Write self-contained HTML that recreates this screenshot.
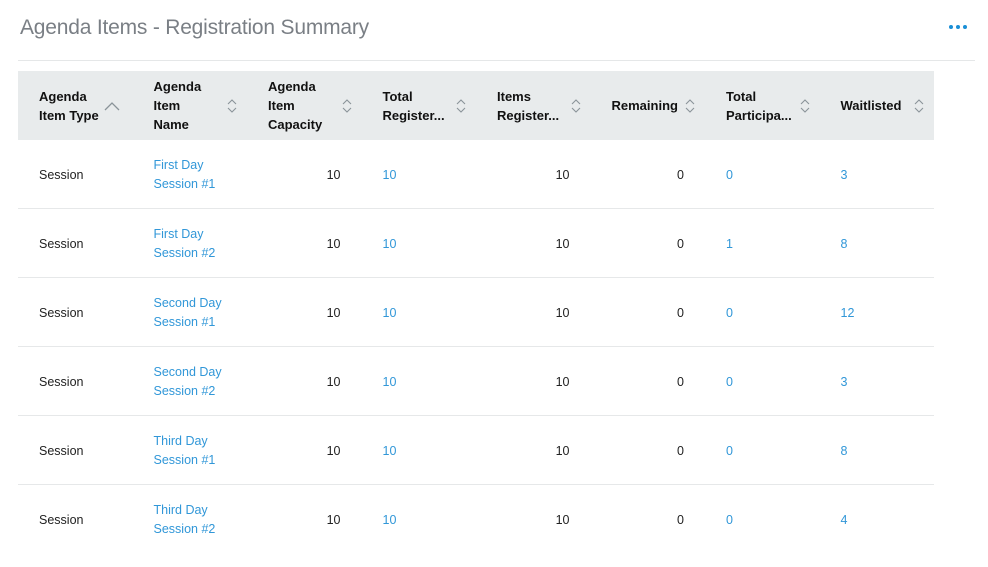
<!DOCTYPE html>
<html><head><style>
body{margin:0;background:#fff;font-family:"Liberation Sans",sans-serif;width:988px;height:567px;overflow:hidden;position:relative}
.t{position:absolute;left:20px;top:16px;font-size:21px;color:#7a7f85;font-weight:300;letter-spacing:-0.2px}
.dots{position:absolute;left:949px;top:25px;display:flex;height:4px}
.dots i{display:block;width:4px;height:4px;border-radius:50%;background:#1a8fd6;margin-right:3px}
.hr{position:absolute;left:18px;top:60px;width:957px;height:1px;background:#e5e7e8}
table{position:absolute;left:18px;top:71px;width:916px;border-collapse:collapse;table-layout:fixed}
th{background:#e8ebec;height:69px;text-align:left;font-size:13px;color:#111;font-weight:bold;padding:0 0 0 21px;line-height:19px;position:relative;vertical-align:middle}
th span{display:block;width:60px}
th svg{position:absolute;right:9px;top:27px}
td{height:66px;border-bottom:1px solid #e6e8e9;font-size:12.5px;color:#222;padding:2px 20px 0 21px;line-height:19px}
td.n{text-align:right;padding-right:21px}
td.l{color:#3197d8}
tr:last-child td{border-bottom:none}
</style></head><body>
<div class="t">Agenda Items - Registration Summary</div>
<div class="dots"><i></i><i></i><i></i></div>
<div class="hr"></div>
<table>
<tr>
<th><span style="width:70px">Agenda Item Type</span><svg width="18" height="14" style="right:12px;top:29px"><path d="M2 10 L9 3 L16 10" fill="none" stroke="#8a9399" stroke-width="1.3"/></svg></th>
<th><span>Agenda Item Name</span><svg width="12" height="16"><path d="M2 6 L6 2 L10 6 M2 10 L6 14 L10 10" fill="none" stroke="#8a9399" stroke-width="1.1"/></svg></th>
<th><span>Agenda Item Capacity</span><svg width="12" height="16"><path d="M2 6 L6 2 L10 6 M2 10 L6 14 L10 10" fill="none" stroke="#8a9399" stroke-width="1.1"/></svg></th>
<th><span>Total Register...</span><svg width="12" height="16"><path d="M2 6 L6 2 L10 6 M2 10 L6 14 L10 10" fill="none" stroke="#8a9399" stroke-width="1.1"/></svg></th>
<th><span>Items Register...</span><svg width="12" height="16"><path d="M2 6 L6 2 L10 6 M2 10 L6 14 L10 10" fill="none" stroke="#8a9399" stroke-width="1.1"/></svg></th>
<th><span style="width:80px">Remaining</span><svg width="12" height="16"><path d="M2 6 L6 2 L10 6 M2 10 L6 14 L10 10" fill="none" stroke="#8a9399" stroke-width="1.1"/></svg></th>
<th><span>Total Participa...</span><svg width="12" height="16"><path d="M2 6 L6 2 L10 6 M2 10 L6 14 L10 10" fill="none" stroke="#8a9399" stroke-width="1.1"/></svg></th>
<th><span style="width:80px">Waitlisted</span><svg width="12" height="16"><path d="M2 6 L6 2 L10 6 M2 10 L6 14 L10 10" fill="none" stroke="#8a9399" stroke-width="1.1"/></svg></th>
</tr>
<tr><td>Session</td><td class="l">First Day<br>Session #1</td><td class="n">10</td><td class="l">10</td><td class="n">10</td><td class="n">0</td><td class="l">0</td><td class="l">3</td></tr>
<tr><td>Session</td><td class="l">First Day<br>Session #2</td><td class="n">10</td><td class="l">10</td><td class="n">10</td><td class="n">0</td><td class="l">1</td><td class="l">8</td></tr>
<tr><td>Session</td><td class="l">Second Day<br>Session #1</td><td class="n">10</td><td class="l">10</td><td class="n">10</td><td class="n">0</td><td class="l">0</td><td class="l">12</td></tr>
<tr><td>Session</td><td class="l">Second Day<br>Session #2</td><td class="n">10</td><td class="l">10</td><td class="n">10</td><td class="n">0</td><td class="l">0</td><td class="l">3</td></tr>
<tr><td>Session</td><td class="l">Third Day<br>Session #1</td><td class="n">10</td><td class="l">10</td><td class="n">10</td><td class="n">0</td><td class="l">0</td><td class="l">8</td></tr>
<tr><td>Session</td><td class="l">Third Day<br>Session #2</td><td class="n">10</td><td class="l">10</td><td class="n">10</td><td class="n">0</td><td class="l">0</td><td class="l">4</td></tr>
</table>
</body></html>
